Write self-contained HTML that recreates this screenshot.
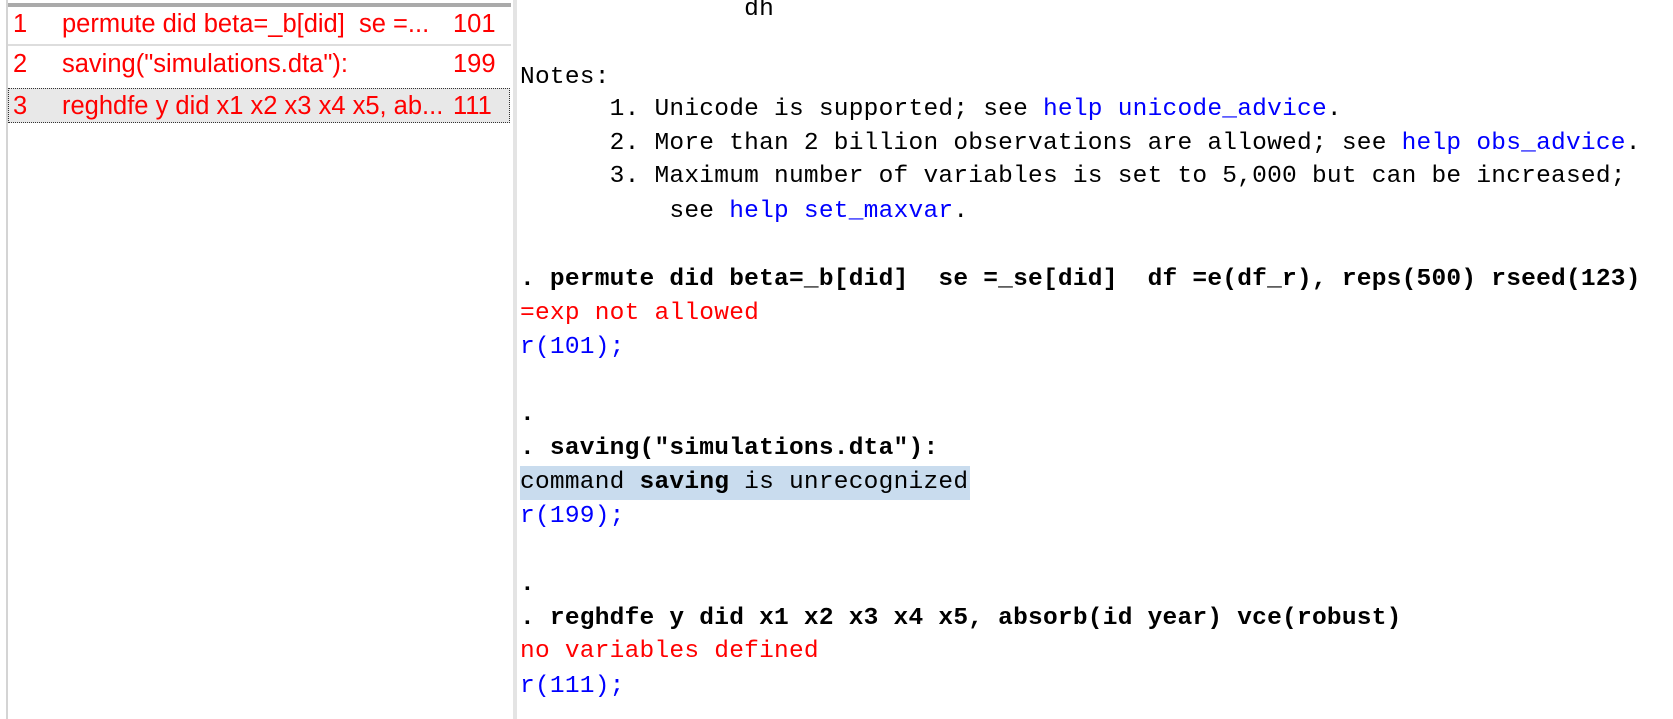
<!DOCTYPE html>
<html><head><meta charset="utf-8"><style>
body{margin:0;width:1673px;height:719px;background:#fff;overflow:hidden;position:relative;font-family:"Liberation Mono",monospace}
.lp{position:absolute;left:6px;top:0;width:505px;height:719px;border-left:2px solid #d4d4d4;border-right:2px solid #d4d4d4}
.div{position:absolute;left:513px;top:0;width:4px;height:719px;background:#e4e4e4}
.row{position:absolute;left:2px;width:500px;height:34px;font-family:"Liberation Sans",sans-serif;font-size:25.5px;color:#f00;line-height:34px}
.row span{position:absolute}
.l{position:absolute;left:520px;font-size:24.5px;line-height:34px;white-space:pre;color:#000;letter-spacing:0.24px}
.b{font-weight:bold}
.bl{color:#0000ff}.r{color:#f00}
</style></head><body>
<div class="lp"></div>
<div style="position:absolute;left:8px;top:3px;width:503px;height:4px;background:#aaa"></div>
<div class="row" style="top:7px;left:8px"><span style="left:5px">1</span><span style="left:54px">permute did beta=_b[did]&nbsp; se =...</span><span style="left:445px">101</span></div>
<div style="position:absolute;left:8px;top:44px;width:503px;height:2px;background:#ddd"></div>
<div class="row" style="top:47px;left:8px"><span style="left:5px">2</span><span style="left:54px">saving("simulations.dta"):</span><span style="left:445px">199</span></div>
<div class="row" style="top:88px;left:8px;width:500px;height:33px;background:#e8e8e8;border:1px dotted #333"><span style="left:4px">3</span><span style="left:53px">reghdfe y did x1 x2 x3 x4 x5, ab...</span><span style="left:444px">111</span></div>
<div class="div"></div>
<div style="position:absolute;left:520px;top:466px;width:450px;height:34px;background:#c9dcee"></div>
<div class="l" style="top:-7px">               dh</div>
<div class="l" style="top:61px">Notes:</div>
<div class="l" style="top:93px">      1. Unicode is supported; see <span class="bl">help unicode_advice</span>.</div>
<div class="l" style="top:127px">      2. More than 2 billion observations are allowed; see <span class="bl">help obs_advice</span>.</div>
<div class="l" style="top:160px">      3. Maximum number of variables is set to 5,000 but can be increased;</div>
<div class="l" style="top:195px">          see <span class="bl">help set_maxvar</span>.</div>
<div class="l b" style="top:263px">. permute did beta=_b[did]  se =_se[did]  df =e(df_r), reps(500) rseed(123)</div>
<div class="l r" style="top:297px">=exp not allowed</div>
<div class="l bl" style="top:331px">r(101);</div>
<div class="l b" style="top:398px">.</div>
<div class="l b" style="top:432px">. saving("simulations.dta"):</div>
<div class="l" style="top:466px">command <b>saving</b> is unrecognized</div>
<div class="l bl" style="top:500px">r(199);</div>
<div class="l b" style="top:568px">.</div>
<div class="l b" style="top:602px">. reghdfe y did x1 x2 x3 x4 x5, absorb(id year) vce(robust)</div>
<div class="l r" style="top:635px">no variables defined</div>
<div class="l bl" style="top:670px">r(111);</div>
</body></html>
